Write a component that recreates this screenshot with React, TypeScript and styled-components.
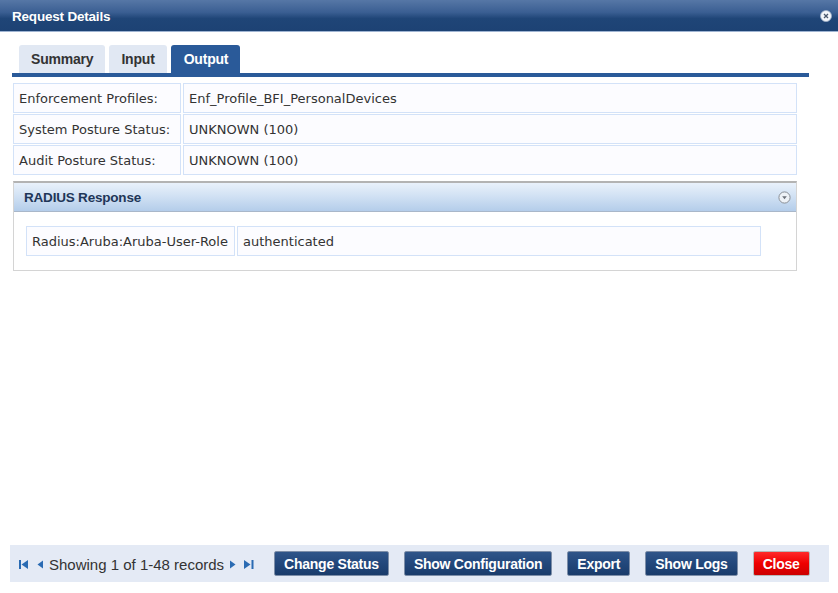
import type { FC } from "react";
import styled, { createGlobalStyle } from "styled-components";

const GlobalStyle = createGlobalStyle`
  html, body {
    margin: 0;
    padding: 0;
    background: #ffffff;
  }
  body {
    font-family: "DejaVu Sans", Verdana, sans-serif;
  }
`;

const Dialog = styled.div`
  width: 838px;
  height: 593px;
  display: flex;
  flex-direction: column;
  background: #fff;
  overflow: hidden;
`;

const TitleBar = styled.div`
  height: 32px;
  flex: 0 0 32px;
  display: flex;
  align-items: center;
  justify-content: space-between;
  padding: 0 6px 0 12px;
  background: linear-gradient(#5677a6 0%, #3a5e92 40%, #1f4577 60%, #1d4274 100%);
  border-bottom: 1px solid #9fb4d2;
  box-sizing: border-box;
`;

const Title = styled.div`
  font-family: "Liberation Sans", Arial, sans-serif;
  font-weight: bold;
  font-size: 13.5px;
  color: #fff;
  letter-spacing: -0.2px;
  margin-top: 1px;
`;

const Content = styled.div`
  flex: 1;
  padding: 13px 29px 0 12px;
`;

const TabBar = styled.div`
  display: flex;
  gap: 4px;
  padding-left: 7px;
  border-bottom: 4px solid #2a5a99;
`;

const Tab = styled.div<{ $active?: boolean }>`
  height: 28px;
  padding: 0 12px 0 ${(p) => (p.$active ? "13px" : "12px")};
  display: flex;
  align-items: center;
  font-family: "Liberation Sans", Arial, sans-serif;
  font-weight: bold;
  font-size: 14px;
  letter-spacing: -0.2px;
  border-radius: 3px 3px 0 0;
  color: ${(p) => (p.$active ? "#ffffff" : "#333333")};
  background: ${(p) => (p.$active ? "#2a5a99" : "#e1e8f3")};
`;

const InfoTable = styled.table`
  width: 788px;
  border-collapse: separate;
  border-spacing: 2px 1px;
  margin: 5px 0 0 -1px;
`;

const Cell = styled.td<{ $width?: number }>`
  height: 28px;
  padding: 0 5px;
  border: 1px solid #d3e2f8;
  background: #fcfcff;
  font-size: 13px;
  color: #333;
  white-space: nowrap;
  width: ${(p) => (p.$width ? `${p.$width}px` : "auto")};
`;

const Panel = styled.div`
  margin: 5px 0 0 1px;
  width: 784px;
  border: 1px solid #d4d4d4;
  border-top: 2px solid #b3b3b3;
  box-sizing: border-box;
  padding-bottom: 14px;
`;

const PanelHeader = styled.div`
  height: 28px;
  display: flex;
  align-items: center;
  justify-content: space-between;
  padding: 0 5px 0 10px;
  background: linear-gradient(#e9f1fb 0%, #d2e2f4 45%, #b4cdea 100%);
  border-bottom: 1px solid #a9b7c9;
`;

const PanelTitle = styled.div`
  font-family: "Liberation Sans", Arial, sans-serif;
  font-weight: bold;
  font-size: 13.5px;
  color: #1f3658;
  letter-spacing: -0.2px;
`;

const InnerTable = styled.table`
  width: 739px;
  border-collapse: separate;
  border-spacing: 2px 0;
  margin: 14px 0 0 10px;
`;

const Footer = styled.div`
  margin: 0 9px 11px 10px;
  height: 37px;
  flex: 0 0 37px;
  display: flex;
  align-items: center;
  padding-left: 9px;
  background: #e4eaf5;
  white-space: nowrap;
`;

const Pager = styled.div`
  display: flex;
  align-items: center;
  flex-shrink: 0;
  font-family: "Liberation Sans", Arial, sans-serif;
  font-size: 15px;
  color: #333;
  margin-right: 20px;
  margin-top: 1px;
`;

const PagerIcon = styled.svg<{ $gap: number }>`
  display: block;
  flex-shrink: 0;
  margin: 1px ${(p) => p.$gap}px 0 0;
`;

const PagerText = styled.span`
  margin-right: 5px;
`;

const Button = styled.button<{ $danger?: boolean }>`
  height: 25px;
  flex-shrink: 0;
  padding: 0 9px;
  margin-right: 15px;
  font-family: "Liberation Sans", Arial, sans-serif;
  font-weight: bold;
  font-size: 14px;
  letter-spacing: -0.25px;
  white-space: nowrap;
  color: #fff;
  border-radius: 2px;
  border: 1px solid ${(p) => (p.$danger ? "#b8b8b8" : "#7d8ea8")};
  background: ${(p) =>
    p.$danger
      ? "linear-gradient(#ff2a2a 0%, #ee0000 50%, #cc0000 100%)"
      : "linear-gradient(#2f5589 0%, #22477b 50%, #1a3c6b 100%)"};
  cursor: pointer;
`;

const CloseIcon: FC = () => (
  <svg width="12" height="12" viewBox="0 0 12 12">
    <circle cx="6" cy="6" r="5.5" fill="#f4f6fa" stroke="#9fb0c8" strokeWidth="0.8" />
    <path d="M4 4 L8 8 M8 4 L4 8" stroke="#49576c" strokeWidth="1.3" />
  </svg>
);

const CollapseIcon: FC = () => (
  <svg width="13" height="13" viewBox="0 0 13 13">
    <circle cx="6.5" cy="6.5" r="5.6" fill="#eef2f7" stroke="#8a8f96" strokeWidth="1" />
    <path d="M4.2 5.2 L8.8 5.2 L6.5 8.2 Z" fill="#6a6f77" />
  </svg>
);

const blue = "#2a6bb3";

const FirstIcon: FC = () => (
  <PagerIcon $gap={8} width="9" height="11" viewBox="0 0 9 11">
    <rect x="0" y="1" width="2" height="9" fill={blue} />
    <path d="M9 1 L9 10 L2.5 5.5 Z" fill={blue} />
  </PagerIcon>
);
const PrevIcon: FC = () => (
  <PagerIcon $gap={5} width="8" height="11" viewBox="0 0 8 11">
    <path d="M7 1.5 L7 9.5 L1.5 5.5 Z" fill={blue} />
  </PagerIcon>
);
const NextIcon: FC = () => (
  <PagerIcon $gap={7} width="8" height="11" viewBox="0 0 8 11">
    <path d="M1 1.5 L1 9.5 L6.5 5.5 Z" fill={blue} />
  </PagerIcon>
);
const LastIcon: FC = () => (
  <PagerIcon $gap={0} width="10" height="11" viewBox="0 0 10 11">
    <path d="M0 1 L0 10 L6.5 5.5 Z" fill={blue} />
    <rect x="7.5" y="1" width="2" height="9" fill={blue} />
  </PagerIcon>
);

const rows = [
  ["Enforcement Profiles:", "Enf_Profile_BFI_PersonalDevices"],
  ["System Posture Status:", "UNKNOWN (100)"],
  ["Audit Posture Status:", "UNKNOWN (100)"],
];

const App: FC = () => {
  return (
    <Dialog>
      <GlobalStyle />
      <TitleBar>
        <Title>Request Details</Title>
        <CloseIcon />
      </TitleBar>
      <Content>
        <TabBar>
          <Tab>Summary</Tab>
          <Tab>Input</Tab>
          <Tab $active>Output</Tab>
        </TabBar>
        <InfoTable>
          <tbody>
            {rows.map(([label, value]) => (
              <tr key={label}>
                <Cell $width={156}>{label}</Cell>
                <Cell>{value}</Cell>
              </tr>
            ))}
          </tbody>
        </InfoTable>
        <Panel>
          <PanelHeader>
            <PanelTitle>RADIUS Response</PanelTitle>
            <CollapseIcon />
          </PanelHeader>
          <InnerTable>
            <tbody>
              <tr>
                <Cell $width={197}>Radius:Aruba:Aruba-User-Role</Cell>
                <Cell>authenticated</Cell>
              </tr>
            </tbody>
          </InnerTable>
        </Panel>
      </Content>
      <Footer>
        <Pager>
          <FirstIcon />
          <PrevIcon />
          <PagerText>Showing 1 of 1-48 records</PagerText>
          <NextIcon />
          <LastIcon />
        </Pager>
        <Button>Change Status</Button>
        <Button>Show Configuration</Button>
        <Button>Export</Button>
        <Button>Show Logs</Button>
        <Button $danger>Close</Button>
      </Footer>
    </Dialog>
  );
};

export default App;
